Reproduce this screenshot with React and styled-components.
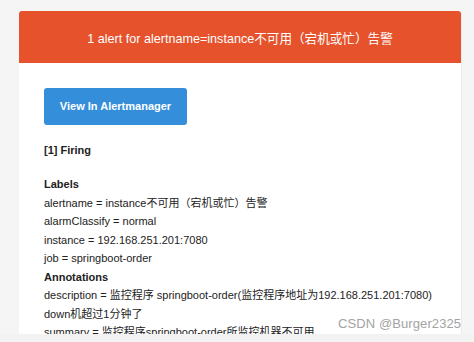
import React from "react";
import styled, { createGlobalStyle } from "styled-components";

const GlobalStyle = createGlobalStyle`
  html, body {
    margin: 0;
    padding: 0;
    background: #f5f5f5;
  }
`;

const Page = styled.div`
  width: 474px;
  height: 342px;
  overflow: hidden;
  position: relative;
  background: #f5f5f5;
  display: flex;
  flex-direction: column;
  font-family: "Liberation Sans", Arial, "Noto Sans CJK SC", sans-serif;
`;

const Viewport = styled.div`
  height: 334px;
  overflow: hidden;
  padding: 11px 12px 0 19px;
  box-sizing: border-box;
`;

const Card = styled.div`
  width: 443px;
  background: #fff;
  border-right: 1px solid #ececec;
  border-radius: 3px 3px 0 0;
  box-sizing: border-box;
`;

const Header = styled.div`
  height: 52px;
  background: #e6522c;
  border-radius: 3px 3px 0 0;
  color: #fff;
  font-size: 12.6px;
  display: flex;
  align-items: center;
  justify-content: center;
`;

const Body = styled.div`
  padding: 25px 20px 0 25px;
  color: #222;
  font-size: 11px;
  line-height: 18.5px;
`;

const Button = styled.a`
  display: inline-flex;
  align-items: center;
  justify-content: center;
  width: 143px;
  height: 37px;
  box-sizing: border-box;
  background: #348eda;
  border-radius: 3px;
  color: #fff;
  font-weight: bold;
  font-size: 11px;
  text-decoration: none;
`;

const Title = styled.div`
  font-weight: bold;
  margin-top: ${(p) => p.$top || 0}px;
`;

const Line = styled.div`
  white-space: nowrap;
`;

const Footer = styled.div`
  flex: 1;
  background: #f2f2f2;
`;

const Watermark = styled.div`
  position: absolute;
  left: 338px;
  top: 316px;
  font-size: 13px;
  color: #a3a3a3;
  letter-spacing: 0.1px;
`;

export default function App() {
  return (
    <>
      <GlobalStyle />
      <Page>
        <Viewport>
          <Card>
            <Header>1 alert for alertname=instance不可用（宕机或忙）告警</Header>
            <Body>
              <Button>View In Alertmanager</Button>
              <Title $top={16}>[1] Firing</Title>
              <Title $top={15.5}>Labels</Title>
              <Line>alertname = instance不可用（宕机或忙）告警</Line>
              <Line>alarmClassify = normal</Line>
              <Line>instance = 192.168.251.201:7080</Line>
              <Line>job = springboot-order</Line>
              <Title>Annotations</Title>
              <Line>description = 监控程序 springboot-order(监控程序地址为192.168.251.201:7080)</Line>
              <Line>down机超过1分钟了</Line>
              <Line>summary = 监控程序springboot-order所监控机器不可用</Line>
            </Body>
          </Card>
        </Viewport>
        <Footer />
        <Watermark>CSDN @Burger2325</Watermark>
      </Page>
    </>
  );
}
